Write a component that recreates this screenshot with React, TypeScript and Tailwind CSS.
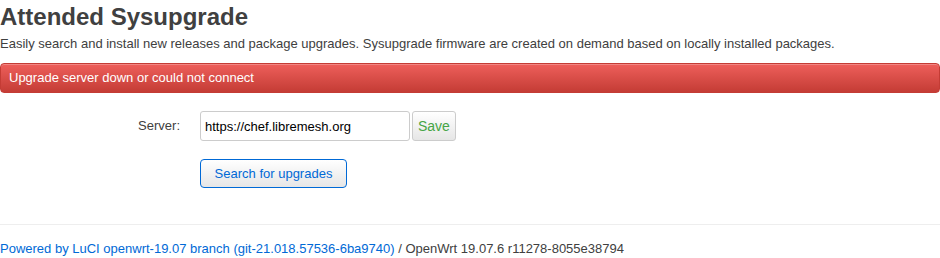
export default function App() {
  return (
    <div className="w-[940px] h-[258px] bg-white overflow-hidden font-['Liberation_Sans',Arial,sans-serif] text-[#404040]">
      <h2 className="text-[24px] leading-[32px] font-bold text-[#404040] pt-[1px]">Attended Sysupgrade</h2>
      <p className="text-[13px] leading-[18px] mt-[2px] text-[#404040]">
        Easily search and install new releases and package upgrades. Sysupgrade firmware are created on demand based on locally installed packages.
      </p>
      <div className="mt-[10px] h-[30px] flex items-center px-[8px] rounded-[4px] border border-[#c43c35] bg-gradient-to-b from-[#ee5f5b] to-[#c43c35] text-white text-[13px] shadow-[inset_0_1px_0_rgba(255,255,255,0.25)]">
        Upgrade server down or could not connect
      </div>
      <div className="flex items-center mt-[18px]">
        <label className="w-[180px] text-right text-[13px] text-[#404040]">Server:</label>
        <input
          className="ml-[20px] w-[210px] h-[30px] border border-[#ccc] rounded-[3px] px-[4px] text-[13px] text-black outline-none"
          defaultValue="https://chef.libremesh.org"
        />
        <button className="ml-[2px] h-[30px] px-[5px] border border-[#ccc] rounded-[3px] bg-gradient-to-b from-white to-[#e6e6e6] text-[#46a546] text-[14px]">
          Save
        </button>
      </div>
      <div className="mt-[18px] ml-[200px]">
        <button className="h-[29px] w-[147px] border border-[#0069d6] rounded-[4px] bg-gradient-to-b from-white to-[#e6e6e6] text-[#0069d6] text-[13px]">
          Search for upgrades
        </button>
      </div>
      <div className="mt-[36px] border-t border-[#eee]" />
      <div className="mt-[15px] text-[13px] leading-[18px]">
        <a className="text-[#0069d6]">Powered by LuCI openwrt-19.07 branch (git-21.018.57536-6ba9740)</a>
        <span className="text-[#404040]"> / OpenWrt 19.07.6 r11278-8055e38794</span>
      </div>
    </div>
  );
}
